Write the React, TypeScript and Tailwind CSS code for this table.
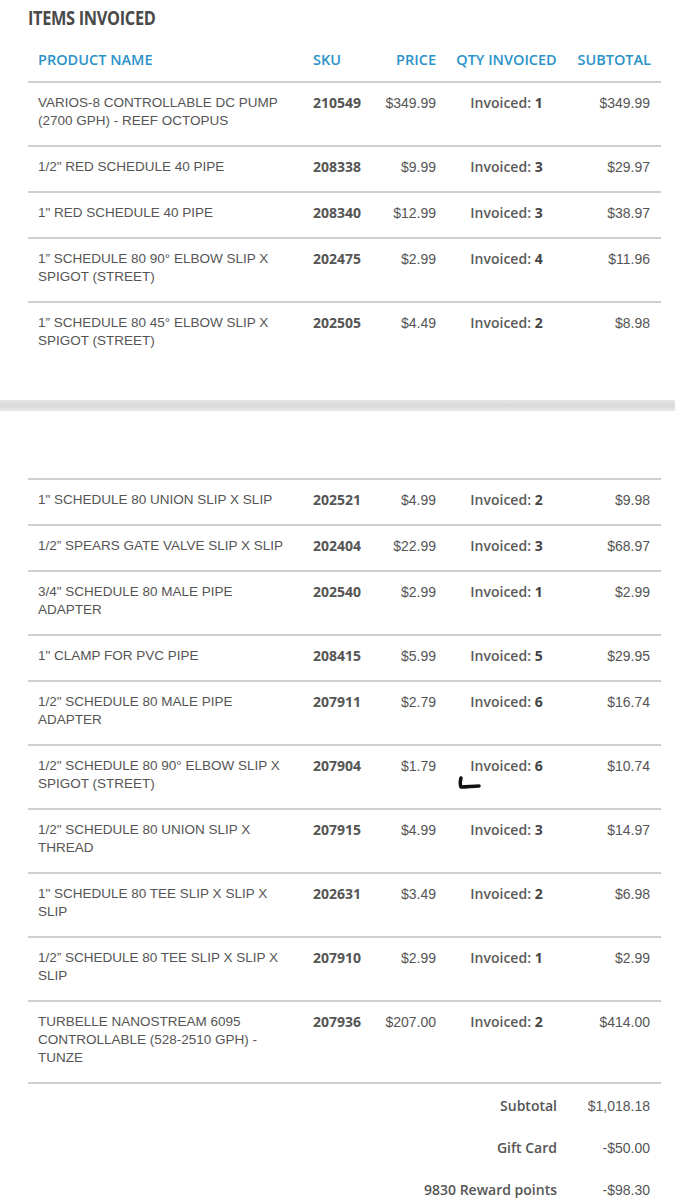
const firstItems = [
  { name: ["VARIOS-8 CONTROLLABLE DC PUMP", "(2700 GPH) - REEF OCTOPUS"], sku: "210549", price: "$349.99", qty: 1, subtotal: "$349.99" },
  { name: ['1/2" RED SCHEDULE 40 PIPE'], sku: "208338", price: "$9.99", qty: 3, subtotal: "$29.97" },
  { name: ['1" RED SCHEDULE 40 PIPE'], sku: "208340", price: "$12.99", qty: 3, subtotal: "$38.97" },
  { name: ["1” SCHEDULE 80 90° ELBOW SLIP X", "SPIGOT (STREET)"], sku: "202475", price: "$2.99", qty: 4, subtotal: "$11.96" },
  { name: ["1” SCHEDULE 80 45° ELBOW SLIP X", "SPIGOT (STREET)"], sku: "202505", price: "$4.49", qty: 2, subtotal: "$8.98" },
];

const secondItems = [
  { name: ['1" SCHEDULE 80 UNION SLIP X SLIP'], sku: "202521", price: "$4.99", qty: 2, subtotal: "$9.98" },
  { name: ["1/2” SPEARS GATE VALVE SLIP X SLIP"], sku: "202404", price: "$22.99", qty: 3, subtotal: "$68.97" },
  { name: ["3/4\" SCHEDULE 80 MALE PIPE", "ADAPTER"], sku: "202540", price: "$2.99", qty: 1, subtotal: "$2.99" },
  { name: ['1" CLAMP FOR PVC PIPE'], sku: "208415", price: "$5.99", qty: 5, subtotal: "$29.95" },
  { name: ['1/2" SCHEDULE 80 MALE PIPE', "ADAPTER"], sku: "207911", price: "$2.79", qty: 6, subtotal: "$16.74" },
  { name: ['1/2" SCHEDULE 80 90° ELBOW SLIP X', "SPIGOT (STREET)"], sku: "207904", price: "$1.79", qty: 6, subtotal: "$10.74" },
  { name: ['1/2" SCHEDULE 80 UNION SLIP X', "THREAD"], sku: "207915", price: "$4.99", qty: 3, subtotal: "$14.97" },
  { name: ['1" SCHEDULE 80 TEE SLIP X SLIP X', "SLIP"], sku: "202631", price: "$3.49", qty: 2, subtotal: "$6.98" },
  { name: ["1/2” SCHEDULE 80 TEE SLIP X SLIP X", "SLIP"], sku: "207910", price: "$2.99", qty: 1, subtotal: "$2.99" },
  { name: ["TURBELLE NANOSTREAM 6095", "CONTROLLABLE (528-2510 GPH) -", "TUNZE"], sku: "207936", price: "$207.00", qty: 2, subtotal: "$414.00" },
];

const totals = [
  { label: "Subtotal", value: "$1,018.18" },
  { label: "Gift Card", value: "-$50.00" },
  { label: "9830 Reward points", value: "-$98.30" },
];

type Item = (typeof firstItems)[number];

const cols = "grid grid-cols-[275px_70px_73px_121px_94px]";
const helv = "font-['Liberation_Sans',Arial,sans-serif]";
const open = "font-['Open_Sans',sans-serif]";

function Row({ item, last }: { item: Item; last?: boolean }) {
  return (
    <div className={`${cols} pt-[11px] pb-[15px] ${last ? "" : "border-b-2 border-[#cfcfcf]"}`}>
      <div className={`pl-[10px] ${helv} text-[13.5px] leading-[18px] text-[#555]`}>
        {item.name.map((line) => (
          <div key={line}>{line}</div>
        ))}
      </div>
      <div className={`pl-[10px] ${open} text-[14px] font-bold leading-[18px] text-[#555]`}>{item.sku}</div>
      <div className={`pr-[10px] text-right ${helv} text-[14px] leading-[18px] text-[#555]`}>{item.price}</div>
      <div className={`text-center ${open} text-[14px] font-semibold leading-[18px] text-[#5a5a5a]`}>
        Invoiced: <span className="font-bold text-[#444]">{item.qty}</span>
      </div>
      <div className={`pr-[11px] text-right ${helv} text-[14px] leading-[18px] text-[#555]`}>{item.subtotal}</div>
    </div>
  );
}

export default function App() {
  return (
    <div className="relative h-[1200px] w-[675px] overflow-hidden bg-white">
      <div className="h-[400px] pl-[28px] pr-[14px]">
        <div className="pt-[7px]">
          <span className={`inline-block origin-left scale-x-[0.86] ${open} text-[19px] font-bold leading-[22px] tracking-[-0.02em] text-[#4a4a4a]`}>
            ITEMS INVOICED
          </span>
        </div>
        <div className={`${cols} mt-[19px] border-b-2 border-[#cfcfcf] pb-[11px] ${open} text-[14.5px] font-semibold leading-[20px] text-[#2a92c9]`}>
          <div className="pl-[10px]">PRODUCT NAME</div>
          <div className="pl-[10px]">SKU</div>
          <div className="pr-[10px] text-right">PRICE</div>
          <div className="text-center">QTY INVOICED</div>
          <div className="pr-[10px] text-right">SUBTOTAL</div>
        </div>
        {firstItems.map((item, i) => (
          <Row key={item.sku} item={item} last={i === firstItems.length - 1} />
        ))}
      </div>

      <div className="h-[11px] w-full bg-gradient-to-b from-[#e6e6e6] via-[#d9d9d9] to-[#e8e8e8]" />

      <div className="pl-[28px] pr-[14px] pt-[67px]">
        <div className="border-t-2 border-[#cfcfcf]">
          {secondItems.map((item) => (
            <Row key={item.sku} item={item} />
          ))}
        </div>
        <div className="pt-[12px]">
          {totals.map((t) => (
            <div key={t.label} className="flex h-[42px] items-start">
              <div className={`w-[529px] text-right ${open} text-[14px] font-semibold leading-[20px] text-[#555]`}>{t.label}</div>
              <div className={`flex-1 pr-[11px] text-right ${helv} text-[14px] leading-[20px] text-[#555]`}>{t.value}</div>
            </div>
          ))}
        </div>
      </div>

      {/* pen mark drawn over the screenshot */}
      <svg className="absolute left-[455px] top-[774px]" width="30" height="18" viewBox="0 0 30 18">
        <path d="M6 4 C5 8 5 11 6 13 C12 13 18 12 24 12" fill="none" stroke="#111" strokeWidth="3.5" strokeLinecap="round" strokeLinejoin="round" />
      </svg>
    </div>
  );
}
